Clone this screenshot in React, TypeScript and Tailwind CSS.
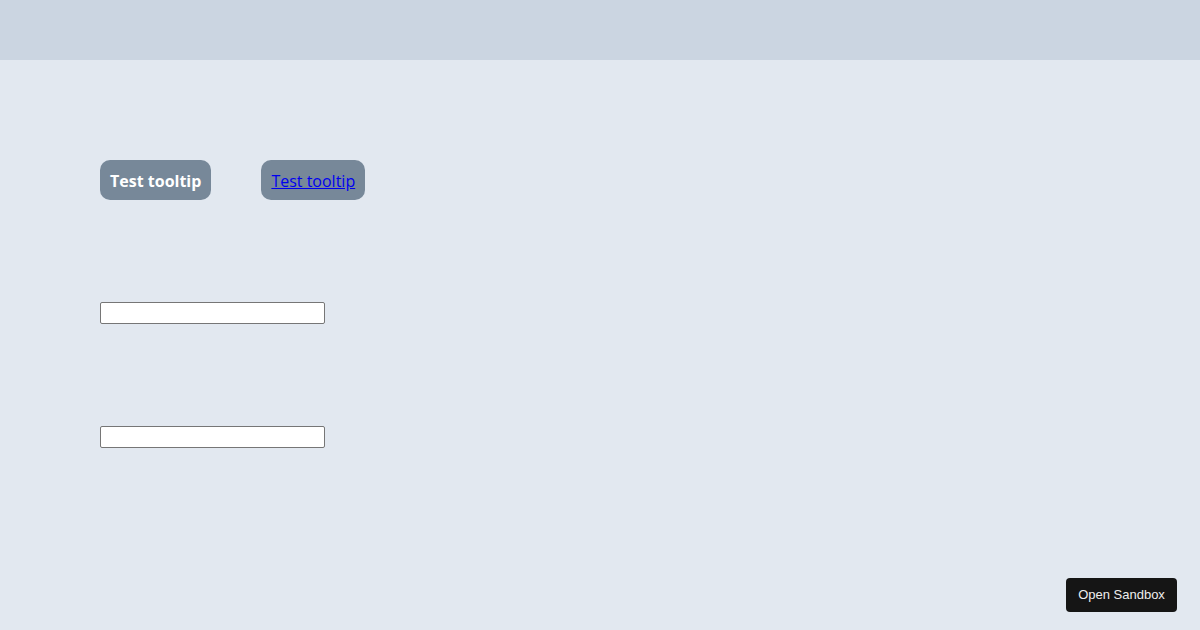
export default function App() {
  return (
    <div className="min-h-[630px] bg-[#e2e8f0] font-['Open_Sans',sans-serif]">
      <header className="h-[60px] bg-[#cbd5e1]" />
      <main className="flex flex-col items-start px-[100px] pt-[100px]">
        <div className="flex items-center gap-[50px]">
          <button className="rounded-[10px] bg-[#778899] px-[10px] pt-[10px] pb-[8px] text-[16px] leading-[22px] font-bold text-white">
            Test tooltip
          </button>
          <div className="rounded-[10px] bg-[#778899] px-[10px] pt-[10px] pb-[8px] text-[16px] leading-[22px]">
            <a href="#" className="text-[#0000ee] underline">
              Test tooltip
            </a>
          </div>
        </div>
        <input
          type="text"
          className="mt-[102px] h-[22px] w-[225px] rounded-[2px] border border-[#767676] bg-white"
        />
        <input
          type="text"
          className="mt-[102px] h-[22px] w-[225px] rounded-[2px] border border-[#767676] bg-white"
        />
      </main>
      <button className="fixed right-[23px] bottom-[18px] h-[34px] w-[111px] rounded-[4px] bg-[#151515] font-['Liberation_Sans',Arial,sans-serif] text-[13px] text-[#eeeeee]">
        Open Sandbox
      </button>
    </div>
  );
}
